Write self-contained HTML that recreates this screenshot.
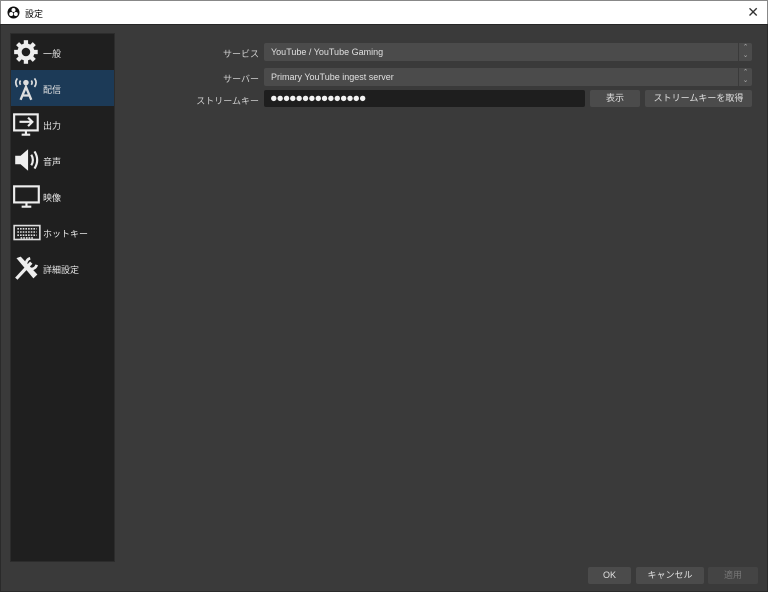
<!DOCTYPE html>
<html><head><meta charset="utf-8"><style>
*{margin:0;padding:0;box-sizing:border-box}
body{width:768px;height:592px;overflow:hidden;background:#3a3a3a;font-family:"Liberation Sans","Noto Sans CJK JP",sans-serif;font-size:9px;color:#dcdcdc;position:relative}
.title{position:absolute;left:0;top:0;width:768px;height:24px;background:#fff;color:#000;border:1px solid #888;border-bottom:none}
.title .t{position:absolute;left:24px;top:6px;font-size:9px}
.title .x{position:absolute;right:8px;top:3px;font-size:14px;color:#333}
.win{position:absolute;left:0;top:24px;width:768px;height:568px;background:#3a3a3a;border:1px solid #2a2a2a;border-top:1px solid #262626}
.side{position:absolute;left:10px;top:33px;width:105px;height:529px;background:#1f1f1f;border:1px solid #2c2c2c}
.item{position:absolute;left:0;width:103px;height:36px}
.item .l{position:absolute;left:32px;top:13px;font-size:9px;color:#e6e6e6}
.item svg{position:absolute;left:1px;top:3px}
.sel{background:#1c3a57}
.lab{position:absolute;font-size:9px;color:#d0d0d0;text-align:right;width:70px}
.combo{position:absolute;left:264px;width:488px;height:18px;background:#4b4b4b;border-radius:2px;padding:4px 7px;color:#e0e0e0}
.combo .ar{position:absolute;right:0;top:0;width:14px;height:18px;border-left:1px solid #3a3a3a;color:#aaa;font-size:7px;line-height:8px;text-align:center;padding-top:1px}
.key{position:absolute;left:264px;top:90px;width:321px;height:17px;background:#1e1e1e;border-radius:2px;padding:1px 6px;font-size:12.5px;letter-spacing:-1.2px;color:#f2f2f2}
.btn{position:absolute;height:17px;background:#4b4b4b;border-radius:2px;text-align:center;line-height:17px;color:#e0e0e0;font-size:9px}
</style></head><body>
<div class="title">
<svg style="position:absolute;left:6px;top:5px" width="13" height="13" viewBox="0 0 13 13"><circle cx="6.5" cy="6.5" r="6" fill="#111"/><circle cx="6.5" cy="4" r="2" fill="#fff"/><circle cx="4.2" cy="8" r="2" fill="#fff"/><circle cx="8.8" cy="8" r="2" fill="#fff"/></svg>
<span class="t">設定</span><span class="x">✕</span></div>
<div class="win"></div>
<div class="side">
<div class="item" style="top:0">
<svg width="30" height="30" viewBox="0 0 28 28"><g fill="#eee"><circle cx="13" cy="14" r="8"/><rect x="11" y="3" width="4" height="22"/><rect x="2" y="12" width="22" height="4"/><rect x="11" y="3" width="4" height="22" transform="rotate(45 13 14)"/><rect x="11" y="3" width="4" height="22" transform="rotate(-45 13 14)"/></g><circle cx="13" cy="14" r="4" fill="#1f1f1f"/></svg><span class="l">一般</span></div>
<div class="item sel" style="top:36px">
<svg width="30" height="30" viewBox="0 0 28 28" fill="none" stroke="#ddd" stroke-width="1.6"><path d="M5 5 Q2 9 5 13M8 7Q6.5 9 8 11M21 5Q24 9 21 13M18 7Q19.5 9 18 11"/><circle cx="13" cy="9" r="1.8" fill="#ddd"/><path d="M8 25 L13 13 L18 25 M10 21 H16" stroke-width="2.2"/></svg><span class="l">配信</span></div>
<div class="item" style="top:72px">
<svg width="30" height="30" viewBox="0 0 28 28" fill="none" stroke="#eee" stroke-width="2"><rect x="2" y="5" width="22" height="15"/><path d="M9 24h8M13 20v4M7 12h12M15 8l4 4-4 4"/></svg><span class="l">出力</span></div>
<div class="item" style="top:108px">
<svg width="30" height="30" viewBox="0 0 28 28"><path d="M3 10h5l7-6v20l-7-6H3z" fill="#eee"/><path d="M18 9q3 5 0 10M21 6q5 8 0 16" fill="none" stroke="#eee" stroke-width="2"/></svg><span class="l">音声</span></div>
<div class="item" style="top:144px">
<svg width="30" height="30" viewBox="0 0 28 28" fill="none" stroke="#eee" stroke-width="2"><rect x="2" y="5" width="23" height="15"/><path d="M9 24h9M13.5 20v4"/></svg><span class="l">映像</span></div>
<div class="item" style="top:180px">
<svg width="30" height="30" viewBox="0 0 28 28" fill="none" stroke="#ddd" stroke-width="1.5"><rect x="2" y="8" width="24" height="13"/><path d="M5 11h18M5 14h18M5 17h18M8 19.5h12" stroke-dasharray="1.5 1"/></svg><span class="l">ホットキー</span></div>
<div class="item" style="top:216px">
<svg width="30" height="30" viewBox="0 0 28 28" stroke="#eee" fill="none" stroke-width="3"><path d="M4 24L18 9"/><path d="M17 5a5 5 0 1 0 6 6" stroke-width="2.5"/><path d="M5 5l3-1 15 16-3 3z" fill="#eee" stroke-width="1"/></svg><span class="l">詳細設定</span></div>
</div>
<div class="lab" style="left:189px;top:47px">サービス</div>
<div class="combo" style="top:43px">YouTube / YouTube Gaming<span class="ar">⌃<br>⌄</span></div>
<div class="lab" style="left:189px;top:72px">サーバー</div>
<div class="combo" style="top:68px">Primary YouTube ingest server<span class="ar">⌃<br>⌄</span></div>
<div class="lab" style="left:189px;top:94px">ストリームキー</div>
<div class="key">●●●●●●●●●●●●●●●</div>
<div class="btn" style="left:590px;top:90px;width:50px">表示</div>
<div class="btn" style="left:645px;top:90px;width:107px">ストリームキーを取得</div>
<div class="btn" style="left:588px;top:567px;width:43px">OK</div>
<div class="btn" style="left:636px;top:567px;width:68px">キャンセル</div>
<div class="btn" style="left:708px;top:567px;width:50px;color:#777;background:#444">適用</div>
</body></html>
